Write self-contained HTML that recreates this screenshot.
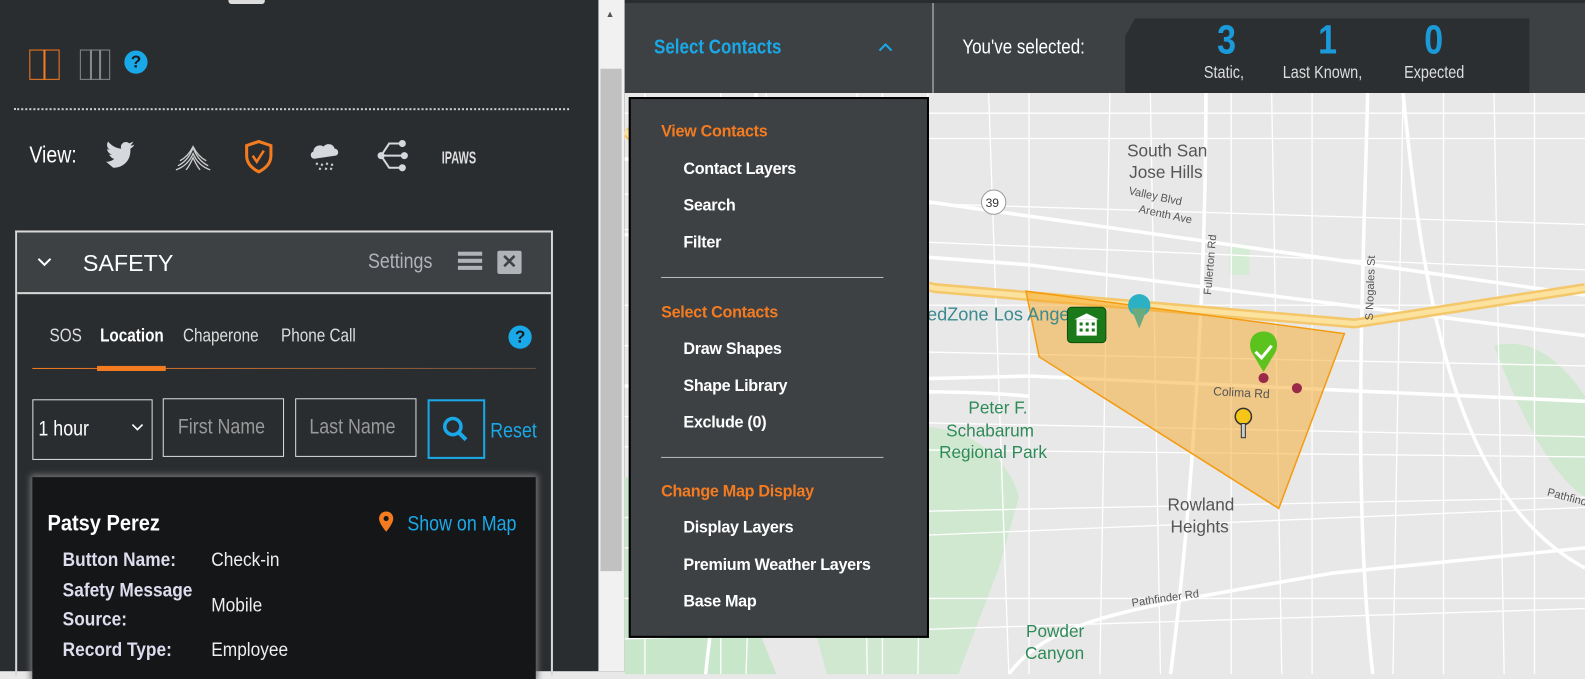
<!DOCTYPE html>
<html><head><meta charset="utf-8"><style>
*{margin:0;padding:0;box-sizing:border-box}
html,body{width:1585px;height:670px;overflow:hidden;background:#e8e8e8}
#w{position:absolute;left:0;top:0;width:1568px;height:664px;transform:scale(1.01085);transform-origin:0 0;font-family:"Liberation Sans",sans-serif;color:#fff;background:#2a2d30}
.a{position:absolute;white-space:nowrap}
.n{transform:scaleX(.84);transform-origin:0 0}
.m{transform:scaleX(.9);transform-origin:0 0}
.menu div{position:absolute;font-size:16px;font-weight:bold;letter-spacing:-0.3px;white-space:nowrap}
.menu .h{color:#f47b20;left:30px}
.menu .i{color:#fff;left:52px}
.lbl{color:#dde;font-weight:bold;font-size:19px}
.val{font-size:19px;color:#eee}
</style></head><body>
<div class="a" style="left:0;top:0;width:600px;height:670px;background:#2a2d30"></div>
<div id="w">
<!-- left panel -->
<div class="a" style="left:226px;top:0;width:36px;height:4px;background:#ddd;border-radius:0 0 3px 3px"></div>
<div class="a" style="left:29px;top:49px;width:30px;height:30px;border:1.5px solid #f47b20"></div>
<div class="a" style="left:43px;top:49px;width:1.5px;height:30px;background:#f47b20"></div>
<div class="a" style="left:79px;top:49px;width:30px;height:30px;border:1.5px solid #888"></div>
<div class="a" style="left:89px;top:49px;width:1.5px;height:30px;background:#888"></div>
<div class="a" style="left:98px;top:49px;width:1.5px;height:30px;background:#888"></div>
<div class="a" style="left:123px;top:50px;width:23px;height:23px;border-radius:50%;background:#1aa9e8;color:#1a1d20;font-weight:bold;font-size:17px;text-align:center;line-height:23px">?</div>
<div class="a" style="left:14px;top:107px;width:549px;border-top:2px dotted #ccc"></div>
<div class="a n" style="left:29px;top:140px;font-size:23px;color:#fff">View:</div>
<svg class="a" style="left:98px;top:138px" width="470" height="36">
<g transform="translate(12,0)"><path d="M2 28c10 0 17-7 17-17v-2c2-1 3-2 4-4-1 1-3 1-4 1 1-1 2-2 3-4-1 1-3 1-4 2-2-2-5-2-7 0-1 1-2 3-1 5-5 0-10-3-13-7-2 3-1 7 2 8-1 0-2 0-3-1 0 3 2 5 5 6h-3c1 2 3 4 5 4-2 2-5 3-8 3z" fill="#d5d8dc"/></g>
<path d="M78 26c8-4 12-10 15-18 3 8 7 14 15 18M80 21c6-3 10-8 13-14 3 6 7 11 13 14M76 30c9-3 14-9 17-16 3 7 8 13 17 16M86 30c3-3 5-8 7-12 2 4 4 9 7 12" stroke="#ccc" stroke-width="1.3" fill="none"/>
<path d="M146 6l12-4 12 4v10c0 8-6 13-12 16-6-3-12-8-12-16z" fill="none" stroke="#f47b20" stroke-width="3"/>
<path d="M152 16l4 6 7-11" stroke="#f47b20" stroke-width="2.5" fill="none"/>
<path d="M213 19c-4 0-5-6-1-7 0-5 6-8 10-5 3-4 10-3 11 2 4 0 5 6 1 7z" fill="#d5d8dc"/>
<path d="M216 23l-1 2M221 24l-1 2M226 23l-1 2M231 24l-1 2M219 28l-1 2M225 28l-1 2M230 28l-1 2" stroke="#ccc" stroke-width="2"/>
<circle cx="279" cy="16" r="3.5" fill="#d5d8dc"/><circle cx="300" cy="4" r="3.5" fill="#d5d8dc"/><circle cx="302" cy="16" r="3.5" fill="#d5d8dc"/><circle cx="300" cy="28" r="3.5" fill="#d5d8dc"/>
<path d="M279 16h22M279 16l8-12h12M279 16l8 12h12" stroke="#d5d8dc" stroke-width="2" fill="none"/>
<text x="339" y="24" font-family="Liberation Sans" font-weight="bold" font-size="17" fill="#ddd" textLength="34" lengthAdjust="spacingAndGlyphs">IPAWS</text>
</svg>
<!-- safety box -->
<div class="a" style="left:15px;top:228px;width:532px;height:440px;border:2px solid #d8d8d8;border-bottom:none"></div>
<div class="a" style="left:17px;top:230px;width:528px;height:61px;background:#3d4144;border-bottom:2px solid #d8d8d8"></div>
<svg class="a" style="left:35px;top:252px" width="18" height="14"><path d="M3 4l6 6 6-6" stroke="#fff" stroke-width="2" fill="none"/></svg>
<div class="a" style="left:82px;top:247px;font-size:23px;color:#fff">SAFETY</div>
<div class="a n" style="left:364px;top:247px;font-size:21px;color:#b0b4b8">Settings</div>
<div class="a" style="left:453px;top:249px;width:24px;height:4px;background:#b0b4b8;box-shadow:0 7px 0 #b0b4b8,0 14px 0 #b0b4b8"></div>
<div class="a" style="left:492px;top:248px;width:24px;height:23px;background:#b0b4b8;border-radius:2px;color:#3d4144;font-weight:bold;font-size:19px;text-align:center;line-height:23px">✕</div>
<div class="a n" style="left:49px;top:322px;font-size:18px;color:#ddd">SOS</div>
<div class="a n" style="left:99px;top:322px;font-size:18px;color:#fff;font-weight:bold">Location</div>
<div class="a n" style="left:181px;top:322px;font-size:18px;color:#ddd">Chaperone</div>
<div class="a n" style="left:278px;top:322px;font-size:18px;color:#ddd">Phone Call</div>
<div class="a" style="left:503px;top:322px;width:23px;height:23px;border-radius:50%;background:#1aa9e8;color:#1a1d20;font-weight:bold;font-size:17px;text-align:center;line-height:23px">?</div>
<div class="a" style="left:32px;top:364px;width:498px;height:1px;background:linear-gradient(90deg,#f47b20,#6a5040)"></div>
<div class="a" style="left:96px;top:362px;width:68px;height:5px;background:#f47b20"></div>
<div class="a" style="left:32px;top:395px;width:119px;height:60px;border:1.5px solid #ddd"></div>
<div class="a n" style="left:38px;top:413px;font-size:21px;color:#fff">1 hour</div>
<svg class="a" style="left:129px;top:418px" width="14" height="10"><path d="M2 2l5 5 5-5" stroke="#fff" stroke-width="1.6" fill="none"/></svg>
<div class="a" style="left:161px;top:394px;width:120px;height:58px;border:1.5px solid #ddd"></div>
<div class="a n" style="left:176px;top:411px;font-size:21px;color:#999">First Name</div>
<div class="a" style="left:292px;top:394px;width:120px;height:58px;border:1.5px solid #ddd"></div>
<div class="a n" style="left:306px;top:411px;font-size:21px;color:#999">Last Name</div>
<div class="a" style="left:423px;top:395px;width:57px;height:59px;border:2px solid #1aa9e8"></div>
<svg class="a" style="left:436px;top:410px" width="30" height="30"><circle cx="12" cy="12" r="8" stroke="#1aa9e8" stroke-width="3.5" fill="none"/><path d="M18 18l7 7" stroke="#1aa9e8" stroke-width="4"/></svg>
<div class="a n" style="left:485px;top:415px;font-size:21px;color:#1aa9e8">Reset</div>
<div class="a" style="left:32px;top:472px;width:498px;height:200px;background:#141618;box-shadow:0 0 6px 2px #777"></div>
<div class="a m" style="left:47px;top:505px;font-size:22px;font-weight:bold;color:#fff">Patsy Perez</div>
<svg class="a" style="left:374px;top:505px" width="16" height="26"><path d="M8 1c-4 0-7 3-7 7 0 5 7 13 7 13s7-8 7-13c0-4-3-7-7-7z" fill="#f47b20"/><circle cx="8" cy="8" r="2.5" fill="#141618"/></svg>
<div class="a n" style="left:403px;top:507px;font-size:21px;color:#1aa9e8">Show on Map</div>
<div class="a m lbl" style="left:62px;top:544px">Button Name:</div>
<div class="a m val" style="left:209px;top:544px">Check-in</div>
<div class="a m lbl" style="left:62px;top:574px">Safety Message</div>
<div class="a m lbl" style="left:62px;top:603px">Source:</div>
<div class="a m val" style="left:209px;top:589px">Mobile</div>
<div class="a m lbl" style="left:62px;top:633px">Record Type:</div>
<div class="a m val" style="left:209px;top:633px">Employee</div>
<!-- scrollbar -->
<div class="a" style="left:592px;top:0;width:26px;height:664px;background:#f1f1f1"></div>
<div class="a" style="left:594px;top:68px;width:21px;height:497px;background:#c1c1c1"></div>
<div class="a" style="left:599px;top:9px;font-size:9px;color:#555">▲</div>
<!-- map -->
<svg class="a" style="left:618px;top:92px" width="950" height="575">
<rect width="950" height="575" fill="#e8e8e8"/>
<path d="M0 380 C60 390 110 430 120 500 L150 575 L0 575Z" fill="#c8e6c9"/>
<path d="M290 330 C340 330 380 360 390 400 L370 470 L330 575 L200 575 L180 500 C190 430 230 340 290 330Z" fill="#cfe8cf"/>
<path d="M860 250 C900 240 930 270 950 300 L950 400 C920 380 890 330 860 250Z" fill="#cfe8cf"/>
<rect x="150" y="110" width="18" height="28" fill="#d4ecd4"/><rect x="598" y="150" width="20" height="30" fill="#d4ecd4"/>
<g stroke="#fff" stroke-width="1.3" fill="none">
<path d="M0 20h950M0 45h950M0 100l950 30M0 135l950 40M0 210h950M0 250l950 20M0 320l950 20M0 350l950 10M0 420l950 -20M0 450l950-40M0 500h950M0 540l950-30"/>
<path d="M20 0v575M95 0v575M140 0l-20 575M230 0l10 575M255 0v575M300 0l-10 575M360 0l20 575M400 0v575M480 0l-10 575M520 0l10 575M600 0v575M640 0l10 575M680 0v575M770 0l-10 575M810 0v575M860 0l10 575M900 0v575"/>
</g>
<g stroke="#fff" stroke-width="3.5" fill="none">
<path d="M0 65 L950 200"/><path d="M0 140 L400 170 L950 240"/>
<path d="M130 0 C120 200 100 400 80 575"/><path d="M575 0 C575 200 560 420 540 575"/>
<path d="M735 0 C730 200 720 400 740 575"/><path d="M0 290 L400 280 L950 305"/>
<path d="M120 40 L210 140"/><path d="M770 0 C790 200 820 400 950 470"/>
<path d="M380 575 C420 520 500 510 700 475 L950 450"/><path d="M60 300 C150 300 300 290 400 300"/>
</g>
<path d="M0 38 C100 110 200 170 307 193 L722 228 L950 193" stroke="#f4c76a" stroke-width="10" fill="none"/>
<path d="M0 38 C100 110 200 170 307 193 L722 228 L950 193" stroke="#fbe29f" stroke-width="5" fill="none"/>
<polygon points="397,196 712,238 647,411 410,261" fill="#f5a623" fill-opacity="0.5" stroke="#f39c12" stroke-width="1.5"/>
<g font-family="Liberation Sans" fill="#555">
<text x="497" y="63" font-size="17">South San</text><text x="499" y="84" font-size="17">Jose Hills</text>
<text x="537" y="413" font-size="17">Rowland</text><text x="540" y="435" font-size="17">Heights</text>
<text x="582" y="299" font-size="12" transform="rotate(3 582 299)">Colima Rd</text>
<text x="498" y="100" font-size="11" transform="rotate(12 498 100)">Valley Blvd</text>
<text x="508" y="118" font-size="11" transform="rotate(12 508 118)">Arenth Ave</text>
<text x="580" y="200" font-size="11" transform="rotate(-85 580 200)">Fullerton Rd</text>
<text x="740" y="225" font-size="11" transform="rotate(-88 740 225)">S Nogales St</text>
<text x="502" y="508" font-size="11" transform="rotate(-8 502 508)">Pathfinder Rd</text>
<text x="912" y="398" font-size="11" transform="rotate(15 912 398)">Pathfinder Rd</text>
</g>
<g font-family="Liberation Sans" fill="#2e8b57" font-size="17">
<text x="340" y="317">Peter F.</text><text x="318" y="340">Schabarum</text><text x="311" y="361">Regional Park</text>
<text x="397" y="538">Powder</text><text x="396" y="560">Canyon</text>
</g>
<text x="267" y="225" font-family="Liberation Sans" font-size="18" fill="#3b8a8f">SpeedZone Los Angeles</text>
<circle cx="365" cy="108" r="12" fill="#fff" stroke="#999"/><text x="357" y="113" font-size="12" fill="#333">39</text>
<circle cx="509" cy="210" r="11" fill="#2bb0c4"/><path d="M501 213 l8 20 8-20z" fill="#6aab7e"/>
<rect x="438" y="212" width="38" height="35" rx="4" fill="#1a7a1a" stroke="#0d4d0d"/>
<g fill="#fff"><rect x="447" y="224" width="20" height="16"/><path d="M445 224h24l-12-6z"/></g>
<g fill="#1a7a1a"><rect x="450" y="227" width="3" height="3"/><rect x="456" y="227" width="3" height="3"/><rect x="462" y="227" width="3" height="3"/><rect x="450" y="233" width="3" height="3"/><rect x="456" y="233" width="3" height="3"/><rect x="462" y="233" width="3" height="3"/></g>
<path d="M632 236c-11 0-16 10-12 20l12 20 12-20c4-10-1-20-12-20z" fill="#5bc21e"/><path d="M624 256l6 6 10-12" stroke="#fff" stroke-width="3" fill="none"/>
<circle cx="632" cy="282" r="5" fill="#9a2a4a"/><circle cx="665" cy="292" r="5" fill="#9a2a4a"/>
<circle cx="612" cy="320" r="8" fill="#f5c518" stroke="#333" stroke-width="1.5"/><rect x="610" y="327" width="4" height="14" fill="#ccc" stroke="#333"/>
</svg>
<!-- header -->
<div class="a" style="left:618px;top:0;width:950px;height:3px;background:#2a2d30"></div>
<div class="a" style="left:618px;top:3px;width:950px;height:89px;background:#3d4144"></div>
<div class="a" style="left:922px;top:3px;width:1.5px;height:89px;background:#888"></div>
<div class="a n" style="left:647px;top:36px;font-size:20px;font-weight:bold;color:#1aa9e8">Select Contacts</div>
<svg class="a" style="left:867px;top:40px" width="18" height="14"><path d="M3 10l6-6 6 6" stroke="#1aa9e8" stroke-width="2" fill="none"/></svg>
<div class="a n" style="left:952px;top:36px;font-size:20px;color:#fff">You've selected:</div>
<svg class="a" style="left:1113px;top:18px" width="400" height="74"><path d="M10 0H400V74H0V18z" fill="#2c2f32"/></svg>
<div class="a n" style="left:1204px;top:18px;font-size:40px;font-weight:bold;color:#1a9ad8">3</div>
<div class="a n" style="left:1304px;top:18px;font-size:40px;font-weight:bold;color:#1a9ad8">1</div>
<div class="a n" style="left:1409px;top:18px;font-size:40px;font-weight:bold;color:#1a9ad8">0</div>
<div class="a n" style="left:1191px;top:62px;font-size:17px;color:#ddd">Static,</div>
<div class="a n" style="left:1269px;top:62px;font-size:17px;color:#ddd">Last Known,</div>
<div class="a n" style="left:1389px;top:62px;font-size:17px;color:#ddd">Expected</div>
<!-- dropdown menu -->
<div class="a menu" style="left:622px;top:96px;width:297px;height:535px;background:#3d4144;border:2px solid #000">
<div class="h" style="top:24px">View Contacts</div>
<div class="i" style="top:61px">Contact Layers</div>
<div class="i" style="top:97px">Search</div>
<div class="i" style="top:134px">Filter</div>
<div style="left:30px;top:176px;width:220px;height:1px;background:#bbb"></div>
<div class="h" style="top:203px">Select Contacts</div>
<div class="i" style="top:239px">Draw Shapes</div>
<div class="i" style="top:276px">Shape Library</div>
<div class="i" style="top:312px">Exclude (0)</div>
<div style="left:30px;top:354px;width:220px;height:1px;background:#bbb"></div>
<div class="h" style="top:380px">Change Map Display</div>
<div class="i" style="top:416px">Display Layers</div>
<div class="i" style="top:453px">Premium Weather Layers</div>
<div class="i" style="top:489px">Base Map</div>
</div>
</div></body></html>
